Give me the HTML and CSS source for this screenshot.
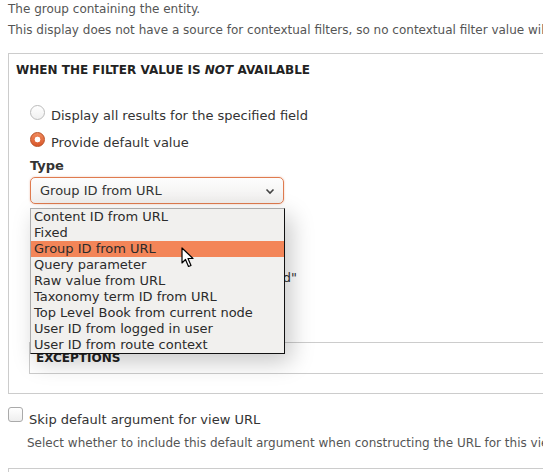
FILE: index.html
```html
<!DOCTYPE html>
<html lang="en">
<head>
    <meta charset="UTF-8">
    <title>Contextual filter</title>
    <link rel="stylesheet" href="styles.css">
</head>
<body>
    <div class="page">
        <p class="desc">The group containing the entity.</p>
        <p class="desc">This display does not have a source for contextual filters, so no contextual filter value will be available unless you select 'Provide default'.</p>

        <div class="box">
            <div class="box-title">When the filter value is <em>not</em> available</div>
            <div class="box-body">
                <label class="radio">
                    <span class="radio-mark"></span>
                    Display all results for the specified field
                </label>
                <label class="radio">
                    <span class="radio-mark checked"></span>
                    Provide default value
                </label>

                <div class="type-field">
                    <div class="field-label">Type</div>
                    <div class="select">
                        Group ID from URL
                        <svg class="caret" width="10" height="7" viewBox="0 0 10 7">
                            <path d="M1.5 1.5 L5 5 L8.5 1.5" fill="none" stroke="#444" stroke-width="1.6"/>
                        </svg>
                    </div>
                    <ul class="dropdown">
                        <li>Content ID from URL</li>
                        <li>Fixed</li>
                        <li class="active">Group ID from URL</li>
                        <li>Query parameter</li>
                        <li>Raw value from URL</li>
                        <li>Taxonomy term ID from URL</li>
                        <li>Top Level Book from current node</li>
                        <li>User ID from logged in user</li>
                        <li>User ID from route context</li>
                    </ul>
                    <svg class="cursor" width="14" height="22" viewBox="0 0 14 22">
                        <path d="M1 1 L1 16 L4.5 12.5 L7.5 19.5 L10 18.5 L7 11.5 L12 11.5 Z" fill="#fff" stroke="#000" stroke-width="1.2" stroke-linejoin="round"/>
                    </svg>
                </div>

                <div class="hidden-row">
                    <span class="hidden-text">Skip if the value is "not found"</span>
                </div>

                <div class="box inner">
                    <div class="box-title">Exceptions</div>
                </div>
            </div>
        </div>

        <label class="check">
            <span class="check-mark"></span>
            Skip default argument for view URL
        </label>
        <p class="desc indent">Select whether to include this default argument when constructing the URL for this view. Skipping default arguments is useful e.g. in the case of feeds.</p>

        <div class="box next"></div>
    </div>
</body>
</html>
```

FILE: styles.css
```css
body {
    margin: 0;
    font-family: 'DejaVu Sans', sans-serif;
    font-size: 12px;
    color: #333;
    background: #fff;
    overflow: hidden;
}

.page {
    width: 620px;
    padding: 2px 8px 0;
}

.desc {
    margin: 0 0 7px;
    line-height: 14px;
    color: #555;
    white-space: nowrap;
}

.desc.indent {
    margin: 8px 0 0 19px;
}

.box {
    border: 1px solid #ccc;
    margin-top: 16px;
    padding: 9px 7px 19px;
}

.box-title {
    font-weight: bold;
    text-transform: uppercase;
    line-height: 14px;
    color: #222;
}

.box-body {
    padding: 31px 0 0 14px;
}

.radio {
    display: flex;
    align-items: flex-start;
    gap: 6px;
    font-size: 13px;
    line-height: 16px;
    margin-bottom: 11px;
}

.radio-mark {
    width: 13px;
    height: 13px;
    margin-top: -3px;
    border: 1px solid #bbb;
    border-radius: 50%;
    background: linear-gradient(#fff, #f0f0f0);
}

.radio-mark.checked {
    border-color: #b84f23;
    background: radial-gradient(circle, #fff 0 2.6px, transparent 3.2px),
                linear-gradient(#f08a5d, #d9572a);
}

.type-field {
    position: relative;
    margin-top: -4px;
}

.field-label {
    font-weight: bold;
    font-size: 13px;
    line-height: 16px;
    margin: 2px 0 3px;
}

.select {
    width: 235px;
    height: 25px;
    border: 1px solid #df7b4f;
    border-radius: 5px;
    background: linear-gradient(#fdfdfd, #f0efee);
    box-shadow: 0 0 2px rgba(223, 123, 79, 0.5);
    display: flex;
    align-items: center;
    justify-content: space-between;
    padding: 0 8px 0 9px;
    font-size: 13px;
}

.caret {
    margin-top: 1px;
}

.dropdown {
    position: absolute;
    top: 50px;
    left: 0;
    width: 253px;
    margin: 0;
    padding: 0;
    list-style: none;
    background: #f1f0ee;
    border: 1px solid #aaa;
    border-right-color: #111;
    border-bottom-color: #111;
    box-shadow: 6px 8px 22px rgba(0, 0, 0, 0.22);
    z-index: 5;
    font-size: 13px;
}

.dropdown li {
    height: 16px;
    line-height: 16px;
    padding-left: 3px;
    color: #2b2b2b;
}

.dropdown li.active {
    background: #f38558;
}

.cursor {
    position: absolute;
    top: 89px;
    left: 151px;
    z-index: 6;
}

.hidden-row {
    margin-top: 66px;
    height: 72px;
}

.hidden-text {
    display: block;
    width: 267px;
    text-align: right;
    font-size: 13px;
    line-height: 16px;
}

.box.inner {
    margin: 0 0 0 -1px;
    padding: 8px 6px 8px;
    border-right: none;
}

.check {
    display: flex;
    align-items: flex-start;
    gap: 6px;
    font-size: 13px;
    line-height: 16px;
    margin-top: 18px;
}

.check-mark {
    width: 13px;
    height: 13px;
    margin-top: -5px;
    border: 1px solid #aaa;
    border-radius: 3px;
    background: linear-gradient(#fff, #eee);
}

.box.next {
    margin-top: 18px;
    height: 40px;
    padding: 0;
}
```
